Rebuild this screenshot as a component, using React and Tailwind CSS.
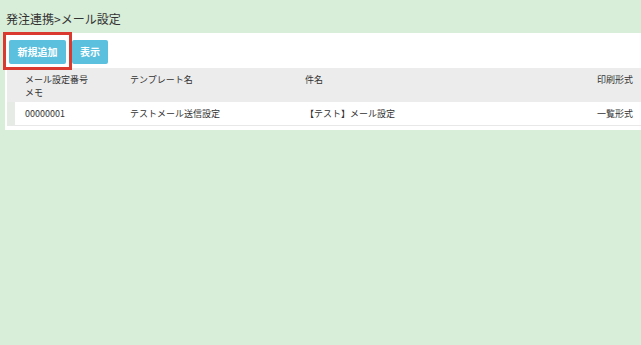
import React from 'react';

const rows = [
  { no: '00000001', template: 'テストメール送信設定', subject: '【テスト】メール設定', format: '一覧形式' },
];

const App = () => {
  return (
    <div
      className="min-h-screen w-full bg-[#d9eed9] text-[#333]"
      style={{ fontFamily: '"Noto Sans CJK JP", "Noto Sans", sans-serif' }}
    >
      {/* パンくず */}
      <div className="h-[33px] pl-[6px] pt-[10px] text-[12px] leading-[17px] text-[#333]">発注連携&gt;メール設定</div>

      <div className="ml-[5px] bg-white pb-[4px]">
        {/* ボタン */}
        <div className="flex items-start gap-[6px] pl-[4px] pt-[7px]">
          <div className="relative flex">
            <button className="block h-[24px] w-[57px] rounded-[2px] bg-[#5bc0de] text-[10px] leading-[24px] font-bold text-white">新規追加</button>
            <div className="pointer-events-none absolute -left-[6px] -top-[8px] -right-[6px] -bottom-[6px] border-[3px] border-[#d9392e]"></div>
          </div>
          <button className="block h-[24px] w-[36px] rounded-[2px] bg-[#5bc0de] text-[10px] leading-[24px] font-bold text-white">表示</button>
        </div>

        {/* 一覧 */}
        <div className="ml-[2px] mt-[4px] text-[9px]">
          <div className="flex h-[34px] bg-[#ececec] pt-[5px] leading-[13px]">
            <div className="w-[123px] pl-[18px]">
              <div>メール設定番号</div>
              <div>メモ</div>
            </div>
            <div className="w-[175px]">テンプレート名</div>
            <div className="flex-1">件名</div>
            <div className="pr-[8px] text-right">印刷形式</div>
          </div>
          {rows.map((r) => (
            <div key={r.no} className="flex h-[24px] items-center border-b border-[#e8e8e8] border-l-[8px] border-l-[#e6ebe6]">
              <div className="w-[115px] pl-[10px]">{r.no}</div>
              <div className="w-[175px]">{r.template}</div>
              <div className="flex-1">{r.subject}</div>
              <div className="pr-[8px] text-right">{r.format}</div>
            </div>
          ))}
        </div>
      </div>
    </div>
  );
};

export default App;
